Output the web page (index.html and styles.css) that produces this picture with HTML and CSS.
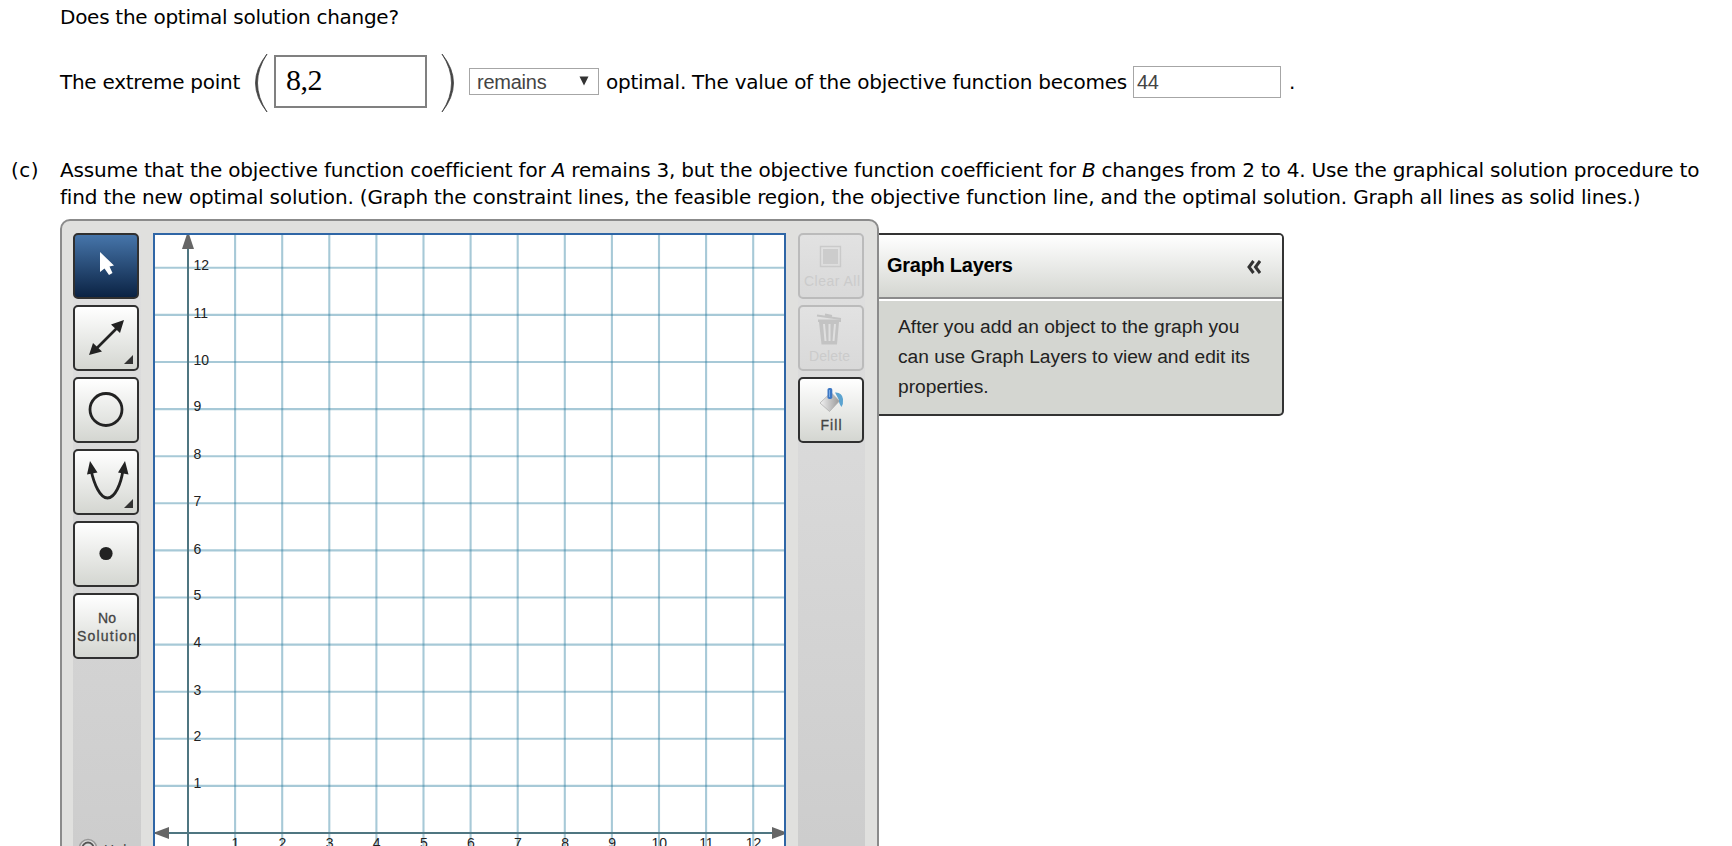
FILE: index.html
```
<!DOCTYPE html>
<html lang="en">
<head>
<meta charset="utf-8">
<title>Graphical solution</title>
<link rel="stylesheet" href="styles.css">
</head>
<body>
<main class="page">
  <p class="question">Does the optimal solution change?</p>
  <div class="answer">
    <span class="lead">The extreme point</span>
    <svg class="paren-left" width="14" height="60" viewBox="0 0 14 60"><path d="M13 2Q-10 31 13 60Q-6 31 13 2Z"/></svg>
    <span class="math-box">8,2</span>
    <svg class="paren-right" width="14" height="60" viewBox="0 0 14 60"><path d="M1 2Q24 31 1 60Q20 31 1 2Z"/></svg>
    <span class="select">remains<svg width="10" height="10" viewBox="0 0 10 10"><path d="M0.5 0.5H9.5L5 9.5Z"/></svg></span>
    <span class="result">optimal. The value of the objective function becomes</span>
    <span class="number-box">44</span>
    <span class="period">.</span>
  </div>
  <div class="part">
    <span class="marker">(c)</span>
    <p class="prompt"><span class="row-one">Assume that the objective function coefficient for <i>A</i> remains 3, but the objective function coefficient for <i>B</i> changes from 2 to 4. Use the graphical solution procedure to</span><br><span class="row-two">find the new optimal solution. (Graph the constraint lines, the feasible region, the objective function line, and the optimal solution. Graph all lines as solid lines.)</span></p>
  </div>
  <div class="grapher">
    <section class="tool-frame">
      <div class="tools">
        <div class="tool selected"><svg viewBox="0 0 62 62"><path fill="#fff" d="M25 17V37L29.5 33.5L34 40L37.5 38L34.5 31.5L39 30.5Z"/></svg></div>
        <div class="tool"><svg viewBox="0 0 62 62"><path d="M21 42L43 20" stroke="#222" stroke-width="2.6"/><path d="M49 13L36 17.500L45 26ZM14 48L18 36L27 44.500Z" fill="#222"/><path d="M49 57H58V48Z" fill="#333"/></svg></div>
        <div class="tool"><svg viewBox="0 0 62 62"><circle cx="31" cy="30.5" r="16" fill="none" stroke="#222" stroke-width="2.8"/></svg></div>
        <div class="tool"><svg viewBox="0 0 62 62"><path d="M16 19C19 33 25 47 32.5 47S46 33 48 19" fill="none" stroke="#222" stroke-width="2.8"/><path d="M15 10L12 23.500L22.500 21.500ZM50 10L43 21.500L53.500 23.500Z" fill="#222"/><path d="M49 57H58V48Z" fill="#333"/></svg></div>
        <div class="tool"><svg viewBox="0 0 62 62"><circle cx="31" cy="30.500" r="6.600" fill="#222"/></svg></div>
        <div class="tool"><svg class="label" viewBox="0 0 62 62"><text x="23" y="27.500" textLength="18">No</text><text x="2" y="45.500" textLength="59">Solution</text></svg></div>
        <div class="help"><svg width="68" height="24" viewBox="0 0 68 24"><circle cx="15" cy="10" r="8.500" fill="#ddd" stroke="#999" stroke-width="1.500"/><circle cx="15" cy="10" r="5.500" fill="none" stroke="#555" stroke-width="2"/><text x="31" y="16.500" textLength="31">Help</text></svg></div>
      </div>
      <div class="plot"><svg id="plot" width="629" height="660" viewBox="155 235 629 660"></svg></div>
      <div class="tools actions">
        <div class="tool disabled"><svg class="label" viewBox="0 0 62 62"><path fill="none" stroke="#cacaca" stroke-width="1.400" d="M20.500 11.500H40.500V31.500H20.500Z"/><path fill="#cccccc" d="M23 14H38V29H23Z"/><text x="4" y="51" textLength="56">Clear All</text></svg></div>
        <div class="tool disabled"><svg class="label" viewBox="0 0 62 62"><path d="M18 12.500H41V15H39L37 37.500H21.500L19 15H18Z" fill="#c3c3c3"/><path d="M17 8.500L41 12M25 7.500L32 9" stroke="#c3c3c3" stroke-width="2"/><path d="M24 17L25.500 34M29.500 17V34M35 17L33.500 34" stroke="#dfdfdf" stroke-width="2"/><text x="9" y="53.500" textLength="41">Delete</text></svg></div>
        <div class="tool"><svg class="label" viewBox="0 0 62 62"><defs><linearGradient id="can"><stop offset="0" stop-color="#f2f2f2"/><stop offset="1" stop-color="#999"/></linearGradient></defs><path d="M20 24L31 13.500L39.500 22L29.500 32.500Z" fill="url(#can)" stroke="#aaa" stroke-width=".7"/><path d="M35 13.500Q42 13 43 20Q43.500 25 41.500 28Q38.500 24 39 21Z" fill="#5ba3d0"/><rect x="27.500" y="9" width="4.800" height="11" rx="1.800" fill="#3c77c4"/><path d="M29.500 11V18" stroke="#79aae4"/><text x="20.500" y="51" textLength="21">Fill</text></svg></div>
      </div>
    </section>
    <aside class="layers">
      <header class="layers-head"><h2>Graph Layers</h2><svg width="16" height="16" viewBox="0 0 16 16"><path d="M8.500 3L4 9L8.500 15M15 3L10.500 9L15 15" fill="none" stroke="#333" stroke-width="3"/></svg></header>
      <p class="layers-body">After you add an object to the graph you<br>can use Graph Layers to view and edit its<br>properties.</p>
    </aside>
  </div>
</main>
<script src="plot.js"></script>
</body>
</html>
```
FILE: styles.css
```
body { margin: 0; background: #fff; color: #000; font: 20px/27px "DejaVu Sans", sans-serif; }
.page { height: 846px; overflow: hidden; }
p, h2 { margin: 0; }
svg { display: block; flex: none; }
.question { padding: 4px 0 0 60px; letter-spacing: -.27px; white-space: nowrap; }
.answer { display: flex; align-items: center; height: 60px; margin-top: 21px; padding-left: 60px; white-space: nowrap; }
.lead { width: 194px; letter-spacing: -.26px; }
.paren-left, .paren-right { fill: #444; stroke: #444; stroke-width: .8; }
.paren-right { margin-left: 14px; }
.math-box { box-sizing: border-box; width: 153px; height: 53px; margin: 0 0 2px 6px; padding-left: 10px; border: 2px solid #808080; letter-spacing: -.5px; font: 30px/45px "Liberation Serif", serif; }
.select { box-sizing: border-box; display: flex; align-items: center; justify-content: space-between; width: 130px; height: 27px; margin: 0 7px 1px 14px; padding: 1px 9px 0 7px; border: 1px solid #a6a6a6; color: #444; fill: #333; font: 20px/25px "Liberation Sans", sans-serif; letter-spacing: -.25px; }
.select svg { margin-bottom: 2px; }
.result { width: 527px; letter-spacing: -.25px; }
.number-box { box-sizing: border-box; width: 148px; height: 32px; padding-left: 3px; border: 1px solid #a6a6a6; color: #444; font: 20px/30px "Liberation Sans", sans-serif; letter-spacing: -.4px; }
.period { margin-left: 8px; }
.part { display: flex; height: 62px; margin-top: 45px; padding-left: 11px; white-space: nowrap; }
.marker { flex: none; width: 49px; letter-spacing: .5px; }
.row-one { letter-spacing: -.203px; }
.row-two { letter-spacing: -.172px; }
.grapher { display: flex; align-items: flex-start; margin-left: 60px; }
.tool-frame { box-sizing: border-box; display: flex; flex: none; width: 819px; height: 700px; padding: 12px 11px; border: 2px solid #8b8b8b; border-radius: 10px; background: #e0e0de; }
.tools { display: flex; flex: none; flex-direction: column; gap: 6px; width: 68px; height: 674px; background: linear-gradient(#e0e0e0, #cbcbcb); }
.actions { width: 67px; }
.tool { box-sizing: border-box; width: 66px; height: 66px; border: 2px solid #303030; border-radius: 5px; background: linear-gradient(#fff, #d4d6d1); }
.selected { background: linear-gradient(#4675aa, #0b2344); }
.disabled { border-color: #bbb; background: linear-gradient(#e2e2e2, #d9d9d9); }
.label, .help { font: 14px "Liberation Sans", sans-serif; fill: #444; }
.label text { stroke: #444; stroke-width: .3; }
.disabled .label text { fill: #cbcbcb; stroke: none; }
.help { margin-top: 173px; }
.plot { box-sizing: border-box; flex: none; width: 633px; height: 674px; margin: 0 12px; border: 2px solid #2f66a6; background: #fff; overflow: hidden; }
.grid { stroke: rgba(35, 120, 155, .4); stroke-width: 2.1; }
.axis { stroke: #4f7681; stroke-width: 2; }
.arrow { fill: #666; }
.tick { fill: #222; font: 14px "Liberation Sans", sans-serif; }
.layers { box-sizing: border-box; width: 405px; height: 183px; margin-top: 14px; border: 2px solid #333; border-left: 0; border-radius: 0 5px 5px 0; background: #d4d6d1; overflow: hidden; }
.layers-head { box-sizing: border-box; display: flex; align-items: center; justify-content: space-between; height: 64px; padding: 0 21px 1px 8px; border-bottom: 2px solid #8b8b8b; background: linear-gradient(#fff, #d4d6d1); }
.layers-head h2 { padding-bottom: 2px; font: bold 20px/24px "Liberation Sans", sans-serif; letter-spacing: -.27px; }
.layers-body { padding: 11px 19px; border-top: 2px solid #fff; color: #222; font: 19.2px/30px "Liberation Sans", sans-serif; white-space: nowrap; }
```
FILE: plot.js
```
const svg = document.getElementById('plot');
const step = 47.1;
const originX = 188;
const originY = 833;
const baselines = [788, 741, 695, 647, 600, 554, 506, 459, 411, 365, 318, 270];
function add(name, attributes, text) {
  const node = document.createElementNS('http://www.w3.org/2000/svg', name);
  for (const key in attributes) node.setAttribute(key, attributes[key]);
  if (text) node.textContent = text;
  svg.appendChild(node);
}
for (let i = 1; i <= 12; i++) {
  const x = originX + i * step;
  const y = originY - i * step;
  add('line', { class: 'grid', x1: x, x2: x, y1: 235, y2: 895 });
  add('line', { class: 'grid', x1: 155, x2: 784, y1: y, y2: y });
}
add('line', { class: 'axis', x1: originX, x2: originX, y1: 240, y2: 895 });
add('line', { class: 'axis', x1: 155, x2: 784, y1: originY, y2: originY });
add('path', { class: 'arrow', d: 'M188 231L194 249H182ZM153 833L169 827V839ZM788 833L772 827V839Z' });
for (let i = 1; i <= 12; i++) {
  add('text', { class: 'tick', x: 193.5, y: baselines[i - 1] }, String(i));
  add('text', { class: 'tick', x: originX + i * step + .3, y: 848, 'text-anchor': 'middle' }, String(i));
}
```
